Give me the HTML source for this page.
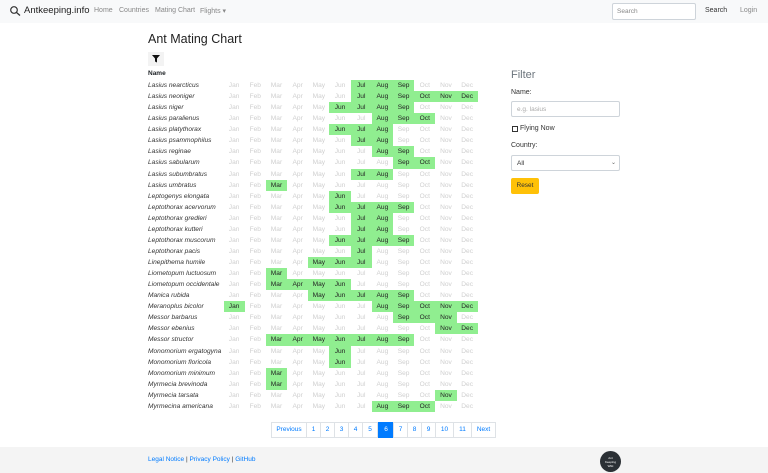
<!DOCTYPE html>
<html><head><meta charset="utf-8"><style>
*{box-sizing:border-box;margin:0;padding:0}
body{width:768px;height:473px;overflow:hidden;background:#fff;font-family:"Liberation Sans",sans-serif;position:relative;color:#212529}
.nav{position:absolute;left:0;top:0;width:768px;height:23px;background:#f8f9fa}
.nav .brand{position:absolute;left:24px;top:5px;font-size:9.5px;color:#222}
.nav .lk{position:absolute;top:7px;font-size:7px;color:#888}
.sinp{position:absolute;left:612px;top:3px;width:84px;height:17px;border:1px solid #ced4da;background:#fff;border-radius:2px;font-size:6.5px;color:#888;padding:4px 4px}
h1{position:absolute;left:148px;top:32px;font-size:12.5px;font-weight:normal;color:#222}
.fbtn{position:absolute;left:148px;top:52px;width:16px;height:14px;background:#f3f3f3}
.hdr{position:absolute;left:148px;top:70px;font-size:6.5px;font-weight:bold}
.rows{position:absolute;left:148px;top:80px}
.r{height:11.07px;display:flex;align-items:center;font-size:6.6px}
.r .n{width:75.5px;font-style:italic;color:#333;white-space:nowrap}
.r span.m{width:21.2px;height:11.07px;line-height:11.07px;text-align:center;color:#cfcfcf}
.r span.g{background:#90ee90;color:#222}
.ft{position:absolute;left:511px;font-size:7px;color:#333}
.box{position:absolute;left:511px;width:109px;height:16px;border:1px solid #ced4da;border-radius:2px;background:#fff;font-size:6.5px;padding:4px 5px}
.pg{position:absolute;top:422px;height:16px;border:1px solid #dee2e6;font-size:6.5px;color:#007bff;text-align:center;line-height:14px;background:#fff}
.foot{position:absolute;left:0;top:447px;width:768px;height:26px;background:#f4f4f4}
</style></head><body>
<div class="nav">
<svg style="position:absolute;left:9px;top:5px" width="12" height="12" viewBox="0 0 12 12"><circle cx="5" cy="5" r="3.3" fill="none" stroke="#333" stroke-width="1.2"/><line x1="7.4" y1="7.4" x2="11" y2="10.5" stroke="#333" stroke-width="1.3"/></svg>
<div class="brand">Antkeeping.info</div>
<div class="lk" style="left:94px">Home</div>
<div class="lk" style="left:119px">Countries</div>
<div class="lk" style="left:155px">Mating Chart</div>
<div class="lk" style="left:200px">Flights ▾</div>
<div class="sinp">Search</div>
<div class="lk" style="left:705px;color:#333">Search</div>
<div class="lk" style="left:740px">Login</div>
</div>
<h1>Ant Mating Chart</h1>
<div class="fbtn"><svg style="position:absolute;left:4px;top:3px" width="8" height="8" viewBox="0 0 8 8"><path d="M0 0H8L5 3.5V7.5L3 6.5V3.5Z" fill="#111"/></svg></div>
<div class="hdr">Name</div>
<div class="rows">
<div class="r"><span class="n">Lasius nearcticus</span><span class="m">Jan</span><span class="m">Feb</span><span class="m">Mar</span><span class="m">Apr</span><span class="m">May</span><span class="m">Jun</span><span class="m g">Jul</span><span class="m g">Aug</span><span class="m g">Sep</span><span class="m">Oct</span><span class="m">Nov</span><span class="m">Dec</span></div>
<div class="r"><span class="n">Lasius neoniger</span><span class="m">Jan</span><span class="m">Feb</span><span class="m">Mar</span><span class="m">Apr</span><span class="m">May</span><span class="m">Jun</span><span class="m g">Jul</span><span class="m g">Aug</span><span class="m g">Sep</span><span class="m g">Oct</span><span class="m g">Nov</span><span class="m g">Dec</span></div>
<div class="r"><span class="n">Lasius niger</span><span class="m">Jan</span><span class="m">Feb</span><span class="m">Mar</span><span class="m">Apr</span><span class="m">May</span><span class="m g">Jun</span><span class="m g">Jul</span><span class="m g">Aug</span><span class="m g">Sep</span><span class="m">Oct</span><span class="m">Nov</span><span class="m">Dec</span></div>
<div class="r"><span class="n">Lasius paralienus</span><span class="m">Jan</span><span class="m">Feb</span><span class="m">Mar</span><span class="m">Apr</span><span class="m">May</span><span class="m">Jun</span><span class="m">Jul</span><span class="m g">Aug</span><span class="m g">Sep</span><span class="m g">Oct</span><span class="m">Nov</span><span class="m">Dec</span></div>
<div class="r"><span class="n">Lasius platythorax</span><span class="m">Jan</span><span class="m">Feb</span><span class="m">Mar</span><span class="m">Apr</span><span class="m">May</span><span class="m g">Jun</span><span class="m g">Jul</span><span class="m g">Aug</span><span class="m">Sep</span><span class="m">Oct</span><span class="m">Nov</span><span class="m">Dec</span></div>
<div class="r"><span class="n">Lasius psammophilus</span><span class="m">Jan</span><span class="m">Feb</span><span class="m">Mar</span><span class="m">Apr</span><span class="m">May</span><span class="m">Jun</span><span class="m g">Jul</span><span class="m g">Aug</span><span class="m">Sep</span><span class="m">Oct</span><span class="m">Nov</span><span class="m">Dec</span></div>
<div class="r"><span class="n">Lasius reginae</span><span class="m">Jan</span><span class="m">Feb</span><span class="m">Mar</span><span class="m">Apr</span><span class="m">May</span><span class="m">Jun</span><span class="m">Jul</span><span class="m g">Aug</span><span class="m g">Sep</span><span class="m">Oct</span><span class="m">Nov</span><span class="m">Dec</span></div>
<div class="r"><span class="n">Lasius sabularum</span><span class="m">Jan</span><span class="m">Feb</span><span class="m">Mar</span><span class="m">Apr</span><span class="m">May</span><span class="m">Jun</span><span class="m">Jul</span><span class="m">Aug</span><span class="m g">Sep</span><span class="m g">Oct</span><span class="m">Nov</span><span class="m">Dec</span></div>
<div class="r"><span class="n">Lasius subumbratus</span><span class="m">Jan</span><span class="m">Feb</span><span class="m">Mar</span><span class="m">Apr</span><span class="m">May</span><span class="m">Jun</span><span class="m g">Jul</span><span class="m g">Aug</span><span class="m">Sep</span><span class="m">Oct</span><span class="m">Nov</span><span class="m">Dec</span></div>
<div class="r"><span class="n">Lasius umbratus</span><span class="m">Jan</span><span class="m">Feb</span><span class="m g">Mar</span><span class="m">Apr</span><span class="m">May</span><span class="m">Jun</span><span class="m">Jul</span><span class="m">Aug</span><span class="m">Sep</span><span class="m">Oct</span><span class="m">Nov</span><span class="m">Dec</span></div>
<div class="r"><span class="n">Leptogenys elongata</span><span class="m">Jan</span><span class="m">Feb</span><span class="m">Mar</span><span class="m">Apr</span><span class="m">May</span><span class="m g">Jun</span><span class="m">Jul</span><span class="m">Aug</span><span class="m">Sep</span><span class="m">Oct</span><span class="m">Nov</span><span class="m">Dec</span></div>
<div class="r"><span class="n">Leptothorax acervorum</span><span class="m">Jan</span><span class="m">Feb</span><span class="m">Mar</span><span class="m">Apr</span><span class="m">May</span><span class="m g">Jun</span><span class="m g">Jul</span><span class="m g">Aug</span><span class="m g">Sep</span><span class="m">Oct</span><span class="m">Nov</span><span class="m">Dec</span></div>
<div class="r"><span class="n">Leptothorax gredleri</span><span class="m">Jan</span><span class="m">Feb</span><span class="m">Mar</span><span class="m">Apr</span><span class="m">May</span><span class="m">Jun</span><span class="m g">Jul</span><span class="m g">Aug</span><span class="m">Sep</span><span class="m">Oct</span><span class="m">Nov</span><span class="m">Dec</span></div>
<div class="r"><span class="n">Leptothorax kutteri</span><span class="m">Jan</span><span class="m">Feb</span><span class="m">Mar</span><span class="m">Apr</span><span class="m">May</span><span class="m">Jun</span><span class="m g">Jul</span><span class="m g">Aug</span><span class="m">Sep</span><span class="m">Oct</span><span class="m">Nov</span><span class="m">Dec</span></div>
<div class="r"><span class="n">Leptothorax muscorum</span><span class="m">Jan</span><span class="m">Feb</span><span class="m">Mar</span><span class="m">Apr</span><span class="m">May</span><span class="m g">Jun</span><span class="m g">Jul</span><span class="m g">Aug</span><span class="m g">Sep</span><span class="m">Oct</span><span class="m">Nov</span><span class="m">Dec</span></div>
<div class="r"><span class="n">Leptothorax pacis</span><span class="m">Jan</span><span class="m">Feb</span><span class="m">Mar</span><span class="m">Apr</span><span class="m">May</span><span class="m">Jun</span><span class="m g">Jul</span><span class="m">Aug</span><span class="m">Sep</span><span class="m">Oct</span><span class="m">Nov</span><span class="m">Dec</span></div>
<div class="r"><span class="n">Linepithema humile</span><span class="m">Jan</span><span class="m">Feb</span><span class="m">Mar</span><span class="m">Apr</span><span class="m g">May</span><span class="m g">Jun</span><span class="m g">Jul</span><span class="m">Aug</span><span class="m">Sep</span><span class="m">Oct</span><span class="m">Nov</span><span class="m">Dec</span></div>
<div class="r"><span class="n">Liometopum luctuosum</span><span class="m">Jan</span><span class="m">Feb</span><span class="m g">Mar</span><span class="m">Apr</span><span class="m">May</span><span class="m">Jun</span><span class="m">Jul</span><span class="m">Aug</span><span class="m">Sep</span><span class="m">Oct</span><span class="m">Nov</span><span class="m">Dec</span></div>
<div class="r"><span class="n">Liometopum occidentale</span><span class="m">Jan</span><span class="m">Feb</span><span class="m g">Mar</span><span class="m g">Apr</span><span class="m g">May</span><span class="m g">Jun</span><span class="m">Jul</span><span class="m">Aug</span><span class="m">Sep</span><span class="m">Oct</span><span class="m">Nov</span><span class="m">Dec</span></div>
<div class="r"><span class="n">Manica rubida</span><span class="m">Jan</span><span class="m">Feb</span><span class="m">Mar</span><span class="m">Apr</span><span class="m g">May</span><span class="m g">Jun</span><span class="m g">Jul</span><span class="m g">Aug</span><span class="m g">Sep</span><span class="m">Oct</span><span class="m">Nov</span><span class="m">Dec</span></div>
<div class="r"><span class="n">Meranoplus bicolor</span><span class="m g">Jan</span><span class="m">Feb</span><span class="m">Mar</span><span class="m">Apr</span><span class="m">May</span><span class="m">Jun</span><span class="m">Jul</span><span class="m g">Aug</span><span class="m g">Sep</span><span class="m g">Oct</span><span class="m g">Nov</span><span class="m g">Dec</span></div>
<div class="r"><span class="n">Messor barbarus</span><span class="m">Jan</span><span class="m">Feb</span><span class="m">Mar</span><span class="m">Apr</span><span class="m">May</span><span class="m">Jun</span><span class="m">Jul</span><span class="m">Aug</span><span class="m g">Sep</span><span class="m g">Oct</span><span class="m g">Nov</span><span class="m">Dec</span></div>
<div class="r"><span class="n">Messor ebenius</span><span class="m">Jan</span><span class="m">Feb</span><span class="m">Mar</span><span class="m">Apr</span><span class="m">May</span><span class="m">Jun</span><span class="m">Jul</span><span class="m">Aug</span><span class="m">Sep</span><span class="m">Oct</span><span class="m g">Nov</span><span class="m g">Dec</span></div>
<div class="r"><span class="n">Messor structor</span><span class="m">Jan</span><span class="m">Feb</span><span class="m g">Mar</span><span class="m g">Apr</span><span class="m g">May</span><span class="m g">Jun</span><span class="m g">Jul</span><span class="m g">Aug</span><span class="m g">Sep</span><span class="m">Oct</span><span class="m">Nov</span><span class="m">Dec</span></div>
<div class="r"><span class="n">Monomorium ergatogyna</span><span class="m">Jan</span><span class="m">Feb</span><span class="m">Mar</span><span class="m">Apr</span><span class="m">May</span><span class="m g">Jun</span><span class="m">Jul</span><span class="m">Aug</span><span class="m">Sep</span><span class="m">Oct</span><span class="m">Nov</span><span class="m">Dec</span></div>
<div class="r"><span class="n">Monomorium floricola</span><span class="m">Jan</span><span class="m">Feb</span><span class="m">Mar</span><span class="m">Apr</span><span class="m">May</span><span class="m g">Jun</span><span class="m">Jul</span><span class="m">Aug</span><span class="m">Sep</span><span class="m">Oct</span><span class="m">Nov</span><span class="m">Dec</span></div>
<div class="r"><span class="n">Monomorium minimum</span><span class="m">Jan</span><span class="m">Feb</span><span class="m g">Mar</span><span class="m">Apr</span><span class="m">May</span><span class="m">Jun</span><span class="m">Jul</span><span class="m">Aug</span><span class="m">Sep</span><span class="m">Oct</span><span class="m">Nov</span><span class="m">Dec</span></div>
<div class="r"><span class="n">Myrmecia brevinoda</span><span class="m">Jan</span><span class="m">Feb</span><span class="m g">Mar</span><span class="m">Apr</span><span class="m">May</span><span class="m">Jun</span><span class="m">Jul</span><span class="m">Aug</span><span class="m">Sep</span><span class="m">Oct</span><span class="m">Nov</span><span class="m">Dec</span></div>
<div class="r"><span class="n">Myrmecia tarsata</span><span class="m">Jan</span><span class="m">Feb</span><span class="m">Mar</span><span class="m">Apr</span><span class="m">May</span><span class="m">Jun</span><span class="m">Jul</span><span class="m">Aug</span><span class="m">Sep</span><span class="m">Oct</span><span class="m g">Nov</span><span class="m">Dec</span></div>
<div class="r"><span class="n">Myrmecina americana</span><span class="m">Jan</span><span class="m">Feb</span><span class="m">Mar</span><span class="m">Apr</span><span class="m">May</span><span class="m">Jun</span><span class="m">Jul</span><span class="m g">Aug</span><span class="m g">Sep</span><span class="m g">Oct</span><span class="m">Nov</span><span class="m">Dec</span></div>
</div>
<div class="ft" style="top:69px;font-size:11px;color:#6c757d">Filter</div>
<div class="ft" style="top:89px">Name:</div>
<div class="box" style="top:101px;color:#aaa">e.g. lasius</div>
<div style="position:absolute;left:512px;top:126px;width:6px;height:6px;border:1px solid #333"></div>
<div class="ft" style="left:520px;top:125px">Flying Now</div>
<div class="ft" style="top:142px">Country:</div>
<div class="box" style="top:155px;color:#333">All<span style="position:absolute;right:3px;top:3px;font-size:6px;color:#666">⌄</span></div>
<div style="position:absolute;left:511px;top:178px;width:28px;height:16px;background:#ffc107;border-radius:2px;font-size:6.5px;color:#333;text-align:center;line-height:16px">Reset</div>
<div class="pg" style="left:271px;width:36px">Previous</div>
<div class="pg" style="left:306px;width:15px">1</div>
<div class="pg" style="left:320px;width:15px">2</div>
<div class="pg" style="left:334px;width:15px">3</div>
<div class="pg" style="left:348px;width:15px">4</div>
<div class="pg" style="left:362px;width:16px">5</div>
<div class="pg" style="left:378px;width:16px;background:#007bff;color:#fff;border-color:#007bff">6</div>
<div class="pg" style="left:393px;width:15px">7</div>
<div class="pg" style="left:407px;width:15px">8</div>
<div class="pg" style="left:421px;width:15px">9</div>
<div class="pg" style="left:435px;width:19px">10</div>
<div class="pg" style="left:453px;width:19px">11</div>
<div class="pg" style="left:471px;width:25px">Next</div>
<div class="foot">
<div style="position:absolute;left:148px;top:9px;font-size:6.5px;color:#007bff">Legal Notice <span style="color:#333">|</span> Privacy Policy <span style="color:#333">|</span> GitHub</div>
<div style="position:absolute;left:600px;top:4px;width:21px;height:21px;border-radius:50%;background:#2b3035;color:#fff;font-size:3px;line-height:4px;text-align:center;padding-top:5px">Ant<br>Keeping<br>Wiki</div>
</div>
</body></html>
